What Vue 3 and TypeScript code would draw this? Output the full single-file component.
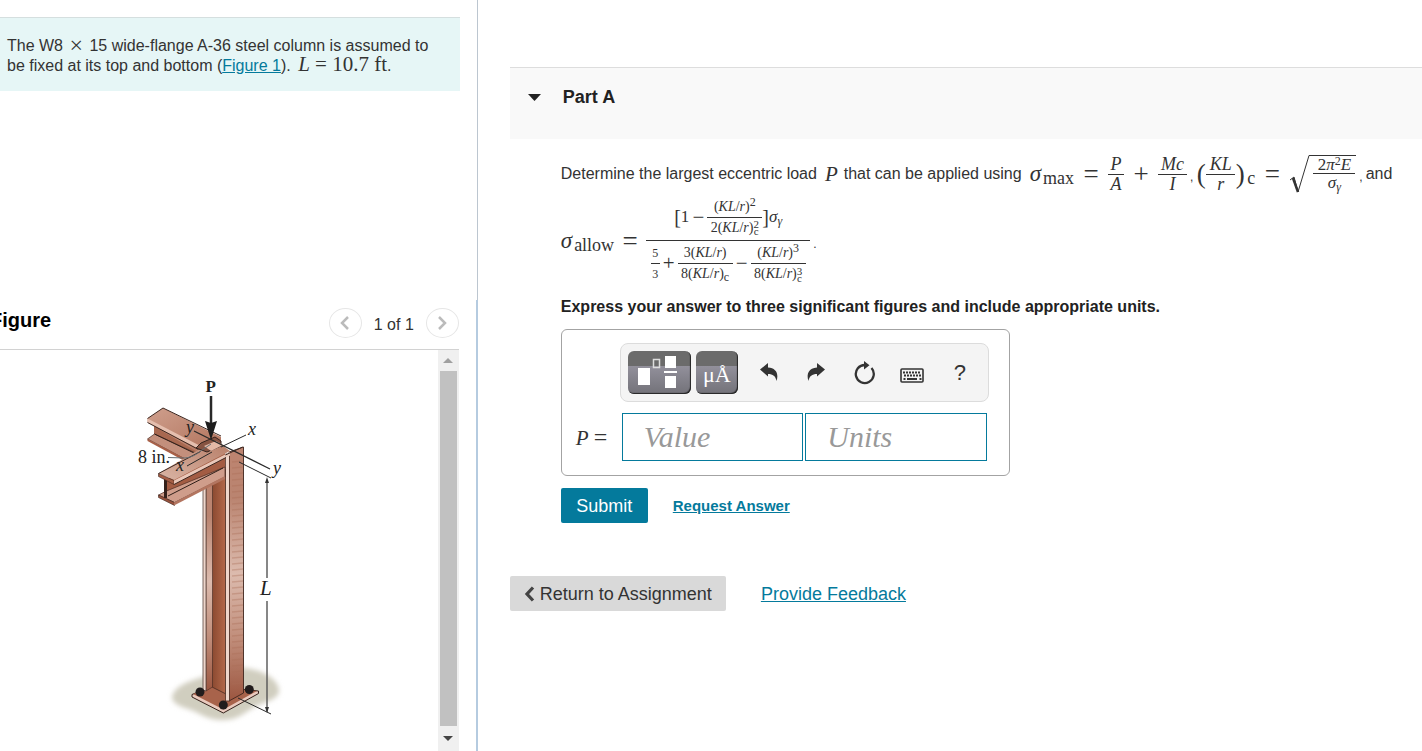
<script setup lang="ts">
import { ref } from 'vue'

const value = ref('')
const units = ref('')
const open = ref(true)
const bolts = [
  { x: 200, y: 692 },
  { x: 223.3, y: 705 },
  { x: 249.3, y: 689.5 },
]
const stripes = Array.from({ length: 38 }, (_, i) => 462 + i * 6)
</script>

<template>
  <div class="page">
    <aside class="side">
      <section class="problem-wrap">
        <p class="problem">
          The W8 <span class="times">×</span> 15 wide-flange A-36 steel column is assumed to be fixed at its top and
          bottom (<a href="#figure">Figure 1</a>). <span class="math"><i>L</i> = 10.7 ft</span>.
        </p>
      </section>
      <section id="figure" class="figure">
        <header class="figure-head">
          <h2>Figure</h2>
          <nav class="pager" aria-label="Figures">
            <button type="button" aria-label="Previous figure">
              <svg width="10" height="14" viewBox="0 0 10 14"><path d="M8 1 2 7l6 6" /></svg>
            </button>
            <span>1 of 1</span>
            <button type="button" aria-label="Next figure">
              <svg width="10" height="14" viewBox="0 0 10 14"><path d="m2 1 6 6-6 6" /></svg>
            </button>
          </nav>
        </header>
        <div class="figure-body">
          <div class="canvas">
            <svg class="drawing" width="170" height="360" viewBox="130 370 170 360" role="img" aria-label="Fixed steel column with eccentric load P">
              <defs>
                <linearGradient id="face" x1="0" y1="0" x2="0" y2="1">
                  <stop offset="0" stop-color="#bd8470" />
                  <stop offset=".2" stop-color="#ba8470" />
                  <stop offset=".5" stop-color="#dcbbae" />
                  <stop offset=".75" stop-color="#c18e7b" />
                  <stop offset="1" stop-color="#9c5640" />
                </linearGradient>
                <linearGradient id="web" x1="0" y1="0" x2="1" y2="0">
                  <stop offset="0" stop-color="#8a4930" />
                  <stop offset="1" stop-color="#b5694b" />
                </linearGradient>
                <linearGradient id="flange" x1="0" y1="0" x2="1" y2="1">
                  <stop offset="0" stop-color="#cf9f8d" />
                  <stop offset="1" stop-color="#b0725b" />
                </linearGradient>
                <linearGradient id="flange2" x1="0" y1="1" x2="1" y2="0">
                  <stop offset="0" stop-color="#dab5a5" />
                  <stop offset="1" stop-color="#b67c66" />
                </linearGradient>
                <filter id="soft" x="-20%" y="-20%" width="140%" height="140%"><feGaussianBlur stdDeviation="2.5" /></filter>
              </defs>

              <path d="M172 697c2-10 16-16 31-20 14-5 26-9 38-9 18 0 37 10 38 22 1 9-14 12-25 17-11 7-18 14-35 13-12-1-18-6-28-10-9-3-19-6-19-13Z" fill="#d0cebf" filter="url(#soft)" />
              <path d="m192 694.500 20-8.500 46.500 5v2.500L223.300 713 192 697Z" fill="#e9cabe" stroke="#35211b" />
              <path d="m193 694 19-8 45 5-33.500 18.500Z" fill="#a8634b" />

              <g stroke-linejoin="round">
                <path d="M212 470h14v224l-14-7Z" fill="url(#web)" stroke="#4a2a20" stroke-width=".8" />
                <path d="M206 472h6.500v215l-6.500 4Z" fill="url(#face)" stroke="#4a2a20" stroke-width=".6" />
                <path d="M203 472h3v219l-3-1Z" fill="#eed6cc" stroke="#58443d" stroke-width=".8" />
                <path d="m229 452 14.500-5v246L229 701Z" fill="url(#face)" stroke="#40251d" stroke-width=".9" />
                <path v-for="y in stripes" :key="y" :d="`M232 ${y}l11-1`" stroke="#aa6d56" stroke-width="1.300" opacity=".35" />
                <path d="M225.500 454h4v247h-4Z" fill="#efd6cb" stroke="#4a2a20" stroke-width=".8" />

                <path d="m154 424 52 27v11l-52-28Z" fill="#a86850" />
                <path d="m147.500 439 7-5L202 456l-2 11Z" fill="#c38f7c" stroke="#4a2a20" stroke-width=".7" />
                <path d="m154.500 434 50 24" stroke="#2f1f19" />
                <path d="m147.500 439 50 26v3l-50-27Z" fill="#a85f46" />
                <path d="M147.500 418.500 163 408l58 29v9l-22 7-51.500-31Z" fill="url(#flange)" />
                <path d="m147.500 418.500 52 27v4l-52-27.500Z" fill="#e5bfaf" />
                <path d="m147.500 422.500 51 27M163 408l58 28M147.500 418.500 163 408" fill="none" stroke="#3c2720" />

                <path d="m167 479 58-31v22l-58 31Z" fill="#a35c43" />
                <path d="m158.500 495 8-4L225 467v10l-50.500 25.500Z" fill="#cf9d8b" stroke="#4a2a20" stroke-width=".7" />
                <path d="m168 496 55-28" stroke="#2f1f19" />
                <path d="m158.500 495 16 7.500v3l-16-8Z" fill="#98513b" stroke="#3c2720" stroke-width=".6" />
                <path d="M174 502.500 225 476v3l-51 26.500Z" fill="#b37560" />
                <path d="M165.500 478v20" stroke="#35211b" stroke-width="3" />
                <path d="M158.500 473.500 215 440l15 11-56 29Z" fill="url(#flange2)" />
                <path d="m158.500 473.500 15.500 7v4l-15.500-8Z" fill="#a65e45" stroke="#40271f" stroke-width=".6" />
                <path d="m174 480.500 56-28.500v3.500l-56 29Z" fill="#e9c7b9" />
                <path d="m158.500 473.500 42-22M174 484.500l52-27M225.500 455l17-8" fill="none" stroke="#3c2720" />
                <path d="m201 443 14-6 6 4v5l-14 6-11-4Z" fill="#865342" stroke="#35231e" />
                <path d="m204 446 12-5 7 4-12 6Z" fill="#e3b8a6" />
              </g>

              <g fill="none" stroke="#292929">
                <path d="m194 431 76 38" stroke-width="1.200" />
                <path d="m187 466 25-14M221 447l25-12" />
                <path d="m168 457.500 17 .5c8-1 12-4 17-8l9-6" stroke="#636b70" />
                <path d="m239 462 32 16M238 698l33 16" />
                <path d="M267 480v98M267 601v111" stroke="#555" stroke-width="1.400" />
                <path d="M211 396v29" stroke-width="2.500" />
              </g>
              <path d="m205 421 6 2 6-2-6 19Z" fill="#1d1d1d" />
              <path d="m267 477 2 6h-4ZM267 713l2-6h-4Z" fill="#333" />
              <circle v-for="b in bolts" :key="b.x" :cx="b.x" :cy="b.y" r="4.500" fill="#211c1c" />

              <g class="labels">
                <text x="205.500" y="392" class="load">P</text>
                <text x="186" y="433" class="var">y</text>
                <text x="248" y="435" class="var">x</text>
                <text x="273" y="474" class="var">y</text>
                <text x="176" y="471" class="var">x</text>
                <text x="138" y="463">8 in.</text>
                <text x="260" y="595" class="var len">L</text>
              </g>
            </svg>
          </div>
          <div class="scroll" aria-hidden="true">
            <span class="arrow up"></span>
            <span class="thumb"></span>
            <span class="arrow down"></span>
          </div>
        </div>
      </section>
    </aside>

    <main class="main">
      <header class="part">
        <button type="button" class="toggle" :aria-expanded="open" aria-label="Toggle Part A" @click="open = !open">
          <svg width="13" height="7" viewBox="0 0 13 7"><path d="M0 0h13L6.500 7Z" fill="#222" /></svg>
        </button>
        <h1>Part A</h1>
      </header>

      <div v-show="open" class="body">
        <div class="row first">
          <span>Determine the largest eccentric load</span>
          <span class="m big lead"><i>P</i></span>
          <span>that can be applied using</span>
          <span class="m sym"><i>σ</i></span><span class="m idx">max</span>
          <span class="m op">=</span>
          <span class="frac"><span><i>P</i></span><span><i>A</i></span></span>
          <span class="m op">+</span>
          <span class="frac wide"><span><i>Mc</i></span><span><i>I</i></span></span>
          <span class="comma">,</span>
          <span class="m paren">(</span>
          <span class="frac wide"><span><i>KL</i></span><span><i>r</i></span></span>
          <span class="m paren">)</span><span class="m idx">c</span>
          <span class="m op">=</span>
          <span class="root">
            <svg width="21" height="40" viewBox="0 0 21 40"><path d="m1 25 4-3 4 15L20 .5h1" fill="none" stroke="#333" /><path d="m4 23 5 14" stroke="#333" stroke-width="2.500" /></svg>
            <span class="radicand"><span class="frac tight"><span>2<i>π</i><sup>2</sup><i>E</i></span><span><i>σ<sub>γ</sub></i></span></span></span>
          </span>
          <span class="comma">,</span>
          <span class="and">and</span>
        </div>

        <div class="row second">
          <span class="m sym"><i>σ</i></span><span class="m idx">allow</span>
          <span class="m op">=</span>
          <span class="stack">
            <span class="level top">
              <span class="bracket">[</span><span class="one">1</span><span class="sop">−</span>
              <span class="sfrac">
                <span>(<i>KL</i>/<i>r</i>)<sup>2</sup></span>
                <span>2(<i>KL</i>/<i>r</i>)<span class="both"><span>2</span><span>c</span></span></span>
              </span>
              <span class="bracket">]</span><i class="one">σ<sub>γ</sub></i>
            </span>
            <span class="level">
              <span class="sfrac slim"><span>5</span><span>3</span></span>
              <span class="sop">+</span>
              <span class="sfrac"><span>3(<i>KL</i>/<i>r</i>)</span><span>8(<i>KL</i>/<i>r</i>)<sub>c</sub></span></span>
              <span class="sop">−</span>
              <span class="sfrac">
                <span>(<i>KL</i>/<i>r</i>)<sup>3</sup></span>
                <span>8(<i>KL</i>/<i>r</i>)<span class="both"><span>3</span><span>c</span></span></span>
              </span>
            </span>
          </span>
          <span class="comma">.</span>
        </div>

        <p class="express">Express your answer to three significant figures and include appropriate units.</p>

        <form @submit.prevent>
          <div class="answer">
            <div class="tools" role="toolbar" aria-label="Equation tools">
              <button type="button" class="dark templates" aria-label="Templates">
                <svg width="63" height="43" viewBox="0 0 63 43">
                  <rect x="10" y="17" width="12" height="17" fill="#fff" />
                  <rect x="25.500" y="8.500" width="6" height="8" fill="none" stroke="#ddd" stroke-width="1.500" />
                  <path d="M37 5h11v12H37ZM37 25h11v12H37ZM36 20h13v2H36Z" fill="#fff" />
                </svg>
              </button>
              <button type="button" class="dark symbols" aria-label="Symbols">μÅ</button>
              <button type="button" class="tool" aria-label="Undo">
                <svg width="24" height="24" viewBox="0 0 24 24"><path d="M4 8.500 12 2v4.500c8 .5 11 6 8.500 13.500-1-5-3.500-7-8.500-7V15.500Z" /></svg>
              </button>
              <button type="button" class="tool" aria-label="Redo">
                <svg width="24" height="24" viewBox="0 0 24 24"><path d="M21 8.500 13 2v4.500c-8 .5-11 6-8.500 13.500 1-5 3.500-7 8.500-7V15.500Z" /></svg>
              </button>
              <button type="button" class="tool" aria-label="Reset">
                <svg width="24" height="24" viewBox="0 0 24 24"><path d="M13 4a9 9 0 1 0 6.500 3" fill="none" stroke="#333" stroke-width="2.300" /><path d="m12 0 5.500 4.200L12 8.500Z" /></svg>
              </button>
              <button type="button" class="tool" aria-label="Keyboard">
                <svg width="24" height="24" viewBox="0 0 24 24"><rect x="1" y="8" width="22" height="13" rx="1" fill="none" stroke="#333" stroke-width="1.600" /><path d="M3 11.500h18M4 14.500h17M3.500 18h2M19.500 18h2" fill="none" stroke="#333" stroke-width="1.800" stroke-dasharray="2 1" /><path d="M7 18h10" stroke="#333" stroke-width="2" /></svg>
              </button>
              <button type="button" class="tool help" aria-label="Help">?</button>
            </div>
            <label for="value" class="m big"><i>P</i> <span class="eq">=</span></label>
            <div class="inputs">
              <input id="value" v-model="value" type="text" placeholder="Value" />
              <input v-model="units" type="text" placeholder="Units" aria-label="Units" />
            </div>
          </div>
          <div class="actions">
            <button type="submit" class="submit">Submit</button>
            <a href="#answer" class="request">Request Answer</a>
          </div>
        </form>
      </div>

      <footer class="foot">
        <button type="button" class="return">
          <svg width="11" height="16" viewBox="0 0 11 16"><path d="M9 1.500 3 8l6 6.500" fill="none" stroke="#444" stroke-width="3.200" /></svg>
          Return to Assignment
        </button>
        <a href="#feedback">Provide Feedback</a>
      </footer>
    </main>
  </div>
</template>

<style>
body {
  margin: 0;
  background: #fff;
}
</style>

<style scoped>
* {
  box-sizing: border-box;
}
.page {
  display: grid;
  grid-template-columns: 33.6% minmax(0, 1fr);
  min-height: 100vh;
  font: 16px/20px "Liberation Sans", Arial, sans-serif;
  color: #333;
}
h1,
h2,
p {
  margin: 0;
}
button {
  font: inherit;
  color: inherit;
  padding: 0;
  border: 0;
  background: none;
  cursor: pointer;
}
a {
  color: #047a9c;
}
.side {
  display: flex;
  flex-direction: column;
}
.problem-wrap {
  height: 300px;
  padding: 17px 17px 0 0;
  border-right: 1px solid #bcc6d0;
}
.problem {
  padding: 18px 20px 15px 7px;
  border-top: 1px solid #d5dfdf;
  background: #e6f6f6;
}
.times {
  padding: 0 2px;
  font-family: "Liberation Serif", serif;
  font-size: 24px;
  line-height: 16px;
  vertical-align: -2px;
}
.math {
  padding-left: 3px;
  font-family: "Liberation Serif", serif;
  font-size: 21px;
  line-height: 16px;
}
.figure {
  flex: 1;
  display: flex;
  flex-direction: column;
  padding-right: 17px;
  border-right: 2px solid #b5cbe0;
  overflow: hidden;
}
.figure-head {
  display: flex;
  justify-content: space-between;
  height: 50px;
  padding-top: 8px;
  border-bottom: 1px solid #d2d2d2;
}
h2 {
  margin-left: -10px;
  font-size: 20px;
  line-height: 24px;
  color: #000;
}
.pager {
  display: flex;
  gap: 12px;
}
.pager span {
  line-height: 34px;
}
.pager button {
  display: grid;
  place-items: center;
  width: 33px;
  height: 30px;
  border: 1px solid #e6e6e6;
  border-radius: 50%;
}
.pager path {
  fill: none;
  stroke: #bbb;
  stroke-width: 2.5;
}
.figure-body {
  flex: 1;
  display: grid;
  grid-template-columns: 1fr 21px;
}
.canvas {
  padding: 20px 0 0 130px;
}
.drawing {
  display: block;
}
.labels {
  font: 18px "Liberation Serif", serif;
  fill: #222;
}
.load {
  font-size: 17px;
  font-weight: bold;
}
.var {
  font-style: italic;
}
.len {
  font-size: 21px;
}
.scroll {
  display: flex;
  flex-direction: column;
  align-items: center;
  background: #f0f0f0;
}
.thumb {
  flex: 1;
  width: 17px;
  background: #c1c1c1;
}
.arrow {
  display: grid;
  place-items: center;
  height: 21px;
}
.arrow::before {
  content: "";
  border: 5px solid transparent;
}
.up::before {
  border-top: 0;
  border-bottom-color: #a0a0a0;
}
.down {
  height: 25px;
}
.down::before {
  border-bottom: 0;
  border-top-color: #444;
}
.main {
  padding: 67px 0 0 32px;
}
.part {
  display: flex;
  align-items: flex-start;
  gap: 22px;
  height: 72px;
  padding: 19px 18px;
  border-top: 1px solid #ddd;
  background: #f9f9f9;
}
.toggle {
  display: flex;
  align-items: center;
  height: 20px;
}
h1 {
  font-size: 18px;
  line-height: 20px;
  color: #222;
}
.body {
  padding: 13px 24px 0 51px;
}
.row {
  display: flex;
  align-items: center;
}
.row > span {
  white-space: nowrap;
}
.first {
  height: 44px;
}
.m,
.frac,
.stack {
  font-family: "Liberation Serif", serif;
}
.big {
  font-size: 21px;
}
.lead {
  padding: 0 6px 0 8px;
}
.sym {
  padding-left: 8px;
  font-size: 23px;
}
.second .sym {
  padding-left: 0;
}
.idx {
  padding: 8px 0 0 2px;
  font-size: 18px;
}
.op {
  width: 34px;
  font-size: 27px;
  text-align: center;
}
.second .op {
  width: 32px;
}
.frac {
  display: flex;
  flex-direction: column;
  min-width: 16px;
  font-size: 18px;
  line-height: 19px;
  text-align: center;
}
.frac > span:last-child {
  border-top: 1px solid #333;
}
.wide {
  min-width: 29px;
}
.comma {
  padding: 6px 3px 0;
  font-size: 12px;
}
.paren {
  width: 10px;
  font-size: 27px;
  line-height: 28px;
  text-align: center;
}
.root {
  display: flex;
  padding-top: 2px;
}
.radicand {
  padding: 0 1px 0 3px;
  border-top: 1px solid #333;
}
.tight {
  min-width: 42px;
  font-size: 17px;
  line-height: 17px;
}
sup,
sub {
  font-size: 12px;
  line-height: 0;
}
sup {
  vertical-align: 5px;
}
sub {
  vertical-align: -3px;
}
.second {
  height: 90px;
}
.stack {
  width: 164px;
  font-size: 14px;
}
.level {
  display: flex;
  align-items: center;
  justify-content: center;
  height: 44px;
}
.top {
  padding-bottom: 4px;
  border-bottom: 1px solid #333;
}
.sfrac {
  display: flex;
  flex-direction: column;
  min-width: 55px;
  text-align: center;
}
.sfrac > span {
  height: 20px;
}
.sfrac > span:last-child {
  border-top: 1px solid #333;
}
.slim {
  min-width: 9px;
  font-size: 12px;
}
.sop {
  width: 18px;
  font-size: 21px;
  text-align: center;
}
.bracket {
  font-size: 20px;
}
.one {
  font-size: 17px;
}
.both {
  display: inline-flex;
  flex-direction: column;
  vertical-align: middle;
  font-size: 11px;
  line-height: 7px;
}
.express {
  padding-top: 11px;
  font-weight: bold;
  color: #222;
}
.answer {
  display: grid;
  grid-template-columns: 44px minmax(0, 1fr);
  row-gap: 11px;
  align-items: center;
  max-width: 449px;
  margin-top: 12px;
  padding: 13px 20px 14px 14px;
  border: 1px solid #a3a3a3;
  border-radius: 6px;
}
.tools {
  grid-column: 2;
  display: flex;
  align-items: center;
  height: 59px;
  padding-left: 7px;
  border: 1px solid #dcdcdc;
  border-radius: 8px;
  background: #f4f4f4;
}
.dark {
  height: 43px;
  border-radius: 6px;
  background: linear-gradient(#6b6b6b 0 35%, #92909b 35%, #737279);
  box-shadow: inset -1px -1px 1px #222;
  color: #fff;
}
.templates {
  width: 63px;
}
.templates svg {
  display: block;
}
.symbols {
  width: 42px;
  margin: 0 6px 0 5px;
  padding-top: 4px;
  font: 22px "Liberation Serif", serif;
}
.tool {
  display: grid;
  place-items: center;
  width: 48px;
  height: 43px;
  fill: #333;
}
.help {
  font-size: 22px;
}
.eq {
  font-size: 24px;
}
.inputs {
  display: grid;
  grid-template-columns: 1fr 1fr;
  gap: 2px;
  padding: 0 2px;
}
input {
  min-width: 0;
  width: 100%;
  height: 48px;
  padding: 0 21px;
  border: 1px solid #047a9c;
  border-radius: 0;
  background: #fff;
  font: italic 30px "Liberation Serif", serif;
  color: #333;
}
input::placeholder {
  color: #999;
  opacity: 1;
}
.actions {
  display: flex;
  align-items: center;
  gap: 25px;
  margin-top: 12px;
}
.submit {
  width: 87px;
  height: 35px;
  border-radius: 2px;
  background: #047a9c;
  font-size: 18px;
  color: #fff;
}
.request {
  font-size: 15px;
  font-weight: bold;
}
.foot {
  display: flex;
  align-items: center;
  gap: 35px;
  margin-top: 53px;
  font-size: 18px;
}
.return {
  display: flex;
  align-items: center;
  gap: 5px;
  height: 35px;
  padding: 0 14px;
  border-radius: 2px;
  background: #d9d9d9;
}
</style>
